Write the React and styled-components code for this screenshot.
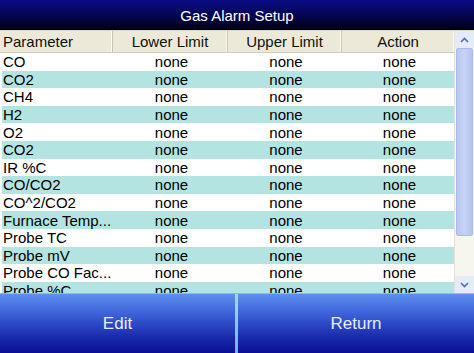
import styled, { createGlobalStyle } from 'styled-components'

const GlobalStyle = createGlobalStyle`
  html, body {
    margin: 0;
    padding: 0;
    background: #fff;
  }
  body {
    font-family: "Liberation Sans", Arial, sans-serif;
  }
`

const Screen = styled.div`
  width: 474px;
  height: 353px;
  display: flex;
  flex-direction: column;
  overflow: hidden;
  background: #fff;
`

const TitleBar = styled.div`
  height: 30px;
  flex: none;
  display: flex;
  align-items: center;
  justify-content: center;
  color: #fff;
  font-size: 15px;
  background: linear-gradient(to bottom, #0b0b86 0%, #05054e 55%, #000010 100%);
`

const Body = styled.div`
  flex: 1;
  display: flex;
  min-height: 0;
  border-top: 1px solid #d8d8c8;
`

const Table = styled.div`
  flex: 1;
  overflow: hidden;
  display: flex;
  flex-direction: column;
`

const COLS = '113px 115px 114px 113px'

const HeaderRow = styled.div`
  height: 21px;
  flex: none;
  display: grid;
  grid-template-columns: ${COLS};
  background: #ece9d8;
  border-bottom: 1px solid #d0ccb8;
`

const HeaderCell = styled.div`
  display: flex;
  align-items: center;
  justify-content: ${(p) => (p.$left ? 'flex-start' : 'center')};
  padding-left: ${(p) => (p.$left ? '3px' : '0')};
  font-size: 15px;
  color: #111;
  border-right: 1px solid #c9c5b0;
  box-shadow: inset -1px 0 0 #fbfaf3;
`

const Row = styled.div`
  height: 17.6px;
  flex: none;
  display: grid;
  grid-template-columns: ${COLS};
  margin-left: 2px;
  background: ${(p) => (p.$alt ? '#b4e4e2' : '#fff')};
`

const Cell = styled.div`
  display: flex;
  align-items: center;
  justify-content: ${(p) => (p.$left ? 'flex-start' : 'center')};
  padding-left: ${(p) => (p.$left ? '1px' : '0')};
  font-size: 15px;
  color: #000;
  white-space: nowrap;
  overflow: visible;
  margin-left: ${(p) => (p.$left ? '0' : '-2px')};
`

const ScrollBar = styled.div`
  width: 19px;
  flex: none;
  display: flex;
  flex-direction: column;
  background: #f6f5ee;
  border-left: 1px solid #e4e2d6;
`

const Arrow = styled.div`
  height: 17px;
  flex: none;
  display: flex;
  align-items: center;
  justify-content: center;
  background: #e6ebf9;
`

const Thumb = styled.div`
  height: 186px;
  flex: none;
  margin: 0 1px;
  background: linear-gradient(to right, #b9c8f0, #c7d3f6 50%, #b4c3ee);
  border: 1px solid #a9b9e8;
  border-radius: 2px;
`

const Track = styled.div`
  flex: 1;
`

const ButtonBar = styled.div`
  height: 59px;
  flex: none;
  display: flex;
  border-top: 1px solid #7ec0e8;
`

const ActionButton = styled.div`
  flex: ${(p) => p.$w} 0 0;
  display: flex;
  align-items: center;
  justify-content: center;
  color: #e8eeff;
  font-size: 17px;
  background: linear-gradient(to bottom, #5f8ff0 0%, #3a5fd6 35%, #1c2fb0 70%, #0a0e92 100%);
`

const Divider = styled.div`
  width: 3px;
  flex: none;
  background: linear-gradient(to bottom, #a8d8ff, #6cb4f4);
`

const Chevron = ({ up }) => (
  <svg width="9" height="6" viewBox="0 0 9 6">
    <path
      d={up ? 'M1 5 L4.5 1.5 L8 5' : 'M1 1 L4.5 4.5 L8 1'}
      fill="none"
      stroke="#4d6bc0"
      strokeWidth="1.6"
    />
  </svg>
)

const rows = [
  'CO',
  'CO2',
  'CH4',
  'H2',
  'O2',
  'CO2',
  'IR %C',
  'CO/CO2',
  'CO^2/CO2',
  'Furnace Temp...',
  'Probe TC',
  'Probe mV',
  'Probe CO Fac...',
  'Probe %C',
  'Probe Dew Pt',
]

export default function App() {
  return (
    <Screen>
      <GlobalStyle />
      <TitleBar>Gas Alarm Setup</TitleBar>
      <Body>
        <Table>
          <HeaderRow>
            <HeaderCell $left>Parameter</HeaderCell>
            <HeaderCell>Lower Limit</HeaderCell>
            <HeaderCell>Upper Limit</HeaderCell>
            <HeaderCell>Action</HeaderCell>
          </HeaderRow>
          {rows.map((name, i) => (
            <Row key={i} $alt={i % 2 === 1}>
              <Cell $left>{name}</Cell>
              <Cell>none</Cell>
              <Cell>none</Cell>
              <Cell>none</Cell>
            </Row>
          ))}
        </Table>
        <ScrollBar>
          <Arrow>
            <Chevron up />
          </Arrow>
          <Thumb />
          <Track />
          <Arrow>
            <Chevron />
          </Arrow>
        </ScrollBar>
      </Body>
      <ButtonBar>
        <ActionButton $w={235}>Edit</ActionButton>
        <Divider />
        <ActionButton $w={236}>Return</ActionButton>
      </ButtonBar>
    </Screen>
  )
}
